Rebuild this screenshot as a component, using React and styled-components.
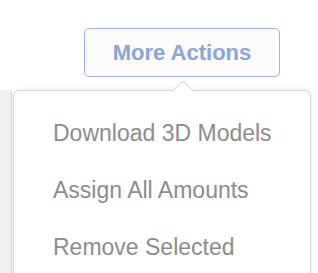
import React from 'react';
import styled, { createGlobalStyle } from 'styled-components';

const GlobalStyle = createGlobalStyle`
  html, body {
    margin: 0;
    padding: 0;
    background: #ffffff;
    font-family: "Liberation Sans", Arial, sans-serif;
  }
`;

const Page = styled.div`
  width: 318px;
  height: 273px;
  overflow: hidden;
  display: flex;
  flex-direction: column;
`;

const Toolbar = styled.div`
  display: flex;
  align-items: flex-start;
  padding: 28px 0 0 84px;
  height: 90px;
  box-sizing: border-box;
  flex-shrink: 0;
`;

const ActionButton = styled.button`
  width: 196px;
  height: 49px;
  box-sizing: border-box;
  border: 1.5px solid #9cb4de;
  border-radius: 5px;
  background: #fbfbfb;
  color: #8aa5d6;
  font-family: "Liberation Sans", Arial, sans-serif;
  font-weight: 700;
  font-size: 22px;
  padding: 0;
  cursor: pointer;
`;

const Body = styled.div`
  display: flex;
  flex: 1;
`;

const SideStrip = styled.div`
  width: 11px;
  background: #f1f1f1;
  border-right: 1px solid #dcdcdc;
  flex-shrink: 0;
`;

const Popover = styled.div`
  position: relative;
  margin-left: 1px;
  width: 298px;
  height: 220px;
  box-sizing: border-box;
  background: #ffffff;
  border: 1px solid #d3d3d3;
  border-radius: 6px;
  box-shadow: 0 0 7px rgba(0, 0, 0, 0.07);
  padding: 14px 0 0 39px;
`;

const Arrow = styled.svg`
  position: absolute;
  top: -10px;
  left: 158px;
  overflow: visible;
`;

const MenuItem = styled.div`
  font-size: 23px;
  line-height: 57px;
  color: #8c8c8c;
  white-space: nowrap;
  cursor: pointer;
`;

const items = ['Download 3D Models', 'Assign All Amounts', 'Remove Selected'];

export default function App() {
  return (
    <>
      <GlobalStyle />
      <Page>
        <Toolbar>
          <ActionButton>More Actions</ActionButton>
        </Toolbar>
        <Body>
          <SideStrip />
          <Popover>
            <Arrow width="22" height="11" viewBox="0 0 22 11">
              <path d="M0 11 L8 2.6 Q11 -0.6 14 2.6 L22 11" fill="#ffffff" stroke="#cfcfcf" strokeWidth="1" />
              <rect x="0.5" y="10" width="21" height="2" fill="#ffffff" />
            </Arrow>
            {items.map((label) => (
              <MenuItem key={label}>{label}</MenuItem>
            ))}
          </Popover>
        </Body>
      </Page>
    </>
  );
}
